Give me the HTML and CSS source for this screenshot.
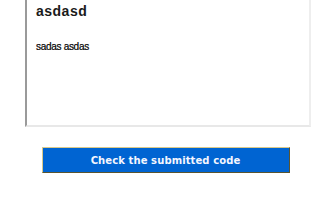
FILE: index.html
```html
<!DOCTYPE html>
<html>
<head>
<meta charset="utf-8">
<link rel="stylesheet" href="styles.css">
</head>
<body>
<div class="page">
  <div class="card">
    <h2 class="title">asdasd</h2>
    <p class="body">sadas asdas</p>
  </div>
  <div class="actions">
    <button class="check">Check the submitted code</button>
  </div>
</div>
</body>
</html>
```
FILE: styles.css
```css
html, body { margin: 0; padding: 0; background: #fff; }
.page { width: 333px; height: 222px; overflow: hidden; font-family: "Liberation Sans", Arial, sans-serif; }
.card {
  margin: -20px 22px 0 25px;
  height: 147px;
  box-sizing: border-box;
  border-left: 2px solid #9a9a9a;
  border-right: 2px solid #eeeeee;
  border-bottom: 2px solid #e8e8e8;
  padding: 23px 9px 0 9px;
}
.title { margin: 0; font-size: 14px; font-weight: bold; color: #1a1a1a; line-height: 16px; letter-spacing: 0.5px; }
.body { margin: 22px 0 0 0; font-size: 10px; color: #000; line-height: 12px; letter-spacing: -0.3px; -webkit-text-stroke: 0.2px #000; }
.actions { display: flex; justify-content: center; padding-top: 20px; }
.check {
  width: 248px; height: 26px;
  margin-left: -2px;
  background: #0064d2;
  color: #f4f6ff;
  font-family: "DejaVu Sans", Verdana, sans-serif;
  font-size: 10px; font-weight: bold;
  letter-spacing: 0.1px;
  border: 1px solid;
  border-color: #d9c98a #5a5530 #5a5530 #d9c98a;
  padding: 0;
}
```
